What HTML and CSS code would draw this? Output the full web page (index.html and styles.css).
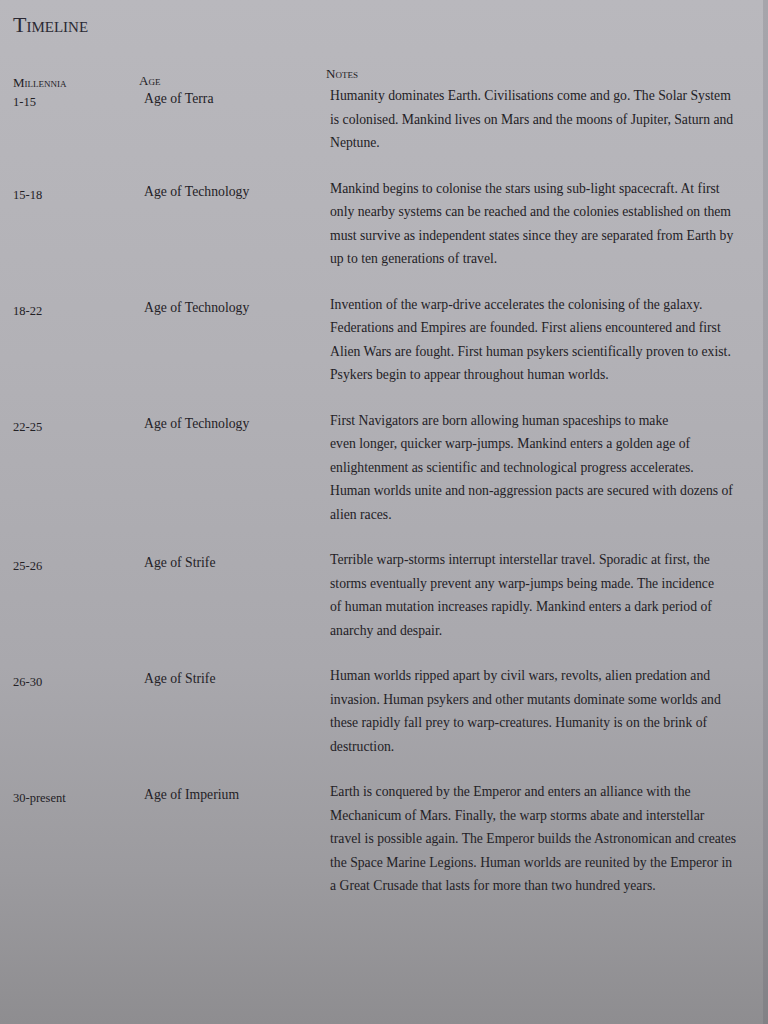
FILE: index.html
```html
<!DOCTYPE html>
<html lang="en">
<head>
<meta charset="utf-8">
<title>Timeline</title>
<link rel="stylesheet" href="styles.css">
</head>
<body>
<main class="page">
  <h1 class="title">Timeline</h1>
  <div class="timeline">
    <div class="row head">
      <span class="mil">Millennia</span>
      <span class="age">Age</span>
      <span class="notes">Notes</span>
    </div>
    <div class="row">
      <span class="mil">1-15</span>
      <span class="age">Age of Terra</span>
      <p class="notes">Humanity dominates Earth. Civilisations come and go. The Solar System<br>is colonised. Mankind lives on Mars and the moons of Jupiter, Saturn and<br>Neptune.</p>
    </div>
    <div class="row">
      <span class="mil">15-18</span>
      <span class="age">Age of Technology</span>
      <p class="notes">Mankind begins to colonise the stars using sub-light spacecraft. At first<br>only nearby systems can be reached and the colonies established on them<br>must survive as independent states since they are separated from Earth by<br>up to ten generations of travel.</p>
    </div>
    <div class="row">
      <span class="mil">18-22</span>
      <span class="age">Age of Technology</span>
      <p class="notes">Invention of the warp-drive accelerates the colonising of the galaxy.<br>Federations and Empires are founded. First aliens encountered and first<br>Alien Wars are fought. First human psykers scientifically proven to exist.<br>Psykers begin to appear throughout human worlds.</p>
    </div>
    <div class="row">
      <span class="mil">22-25</span>
      <span class="age">Age of Technology</span>
      <p class="notes">First Navigators are born allowing human spaceships to make<br>even longer, quicker warp-jumps. Mankind enters a golden age of<br>enlightenment as scientific and technological progress accelerates.<br>Human worlds unite and non-aggression pacts are secured with dozens of<br>alien races.</p>
    </div>
    <div class="row">
      <span class="mil">25-26</span>
      <span class="age">Age of Strife</span>
      <p class="notes">Terrible warp-storms interrupt interstellar travel. Sporadic at first, the<br>storms eventually prevent any warp-jumps being made. The incidence<br>of human mutation increases rapidly. Mankind enters a dark period of<br>anarchy and despair.</p>
    </div>
    <div class="row">
      <span class="mil">26-30</span>
      <span class="age">Age of Strife</span>
      <p class="notes">Human worlds ripped apart by civil wars, revolts, alien predation and<br>invasion. Human psykers and other mutants dominate some worlds and<br>these rapidly fall prey to warp-creatures. Humanity is on the brink of<br>destruction.</p>
    </div>
    <div class="row">
      <span class="mil">30-present</span>
      <span class="age">Age of Imperium</span>
      <p class="notes">Earth is conquered by the Emperor and enters an alliance with the<br>Mechanicum of Mars. Finally, the warp storms abate and interstellar<br>travel is possible again. The Emperor builds the Astronomican and creates<br>the Space Marine Legions. Human worlds are reunited by the Emperor in<br>a Great Crusade that lasts for more than two hundred years.</p>
    </div>
  </div>
</main>
</body>
</html>
```

FILE: styles.css
```css
html, body {
  margin: 0;
  padding: 0;
}

body {
  width: 768px;
  min-height: 1024px;
  background: linear-gradient(180deg, #b9b8bd 0%, #b2b1b6 35%, #a9a8ad 65%, #9c9b9f 85%, #8e8d90 100%);
  font-family: "Liberation Serif", "Times New Roman", serif;
  color: #232126;
}

.page {
  box-sizing: border-box;
  min-height: 1024px;
  padding: 11px 0 0 13px;
  border-right: 5px solid rgba(70, 68, 78, 0.16);
}

.title {
  margin: 0;
  font-size: 22px;
  line-height: 28px;
  font-weight: normal;
  font-variant: small-caps;
  color: #2b2933;
}

.timeline {
  display: flex;
  flex-direction: column;
  gap: 22px;
  margin-top: 25px;
}

.row {
  display: grid;
  grid-template-columns: 131px 186px 1fr;
  align-items: start;
  font-size: 13.7px;
  line-height: 23.5px;
}

.row .mil {
  padding-top: 7px;
  font-size: 12.5px;
}

.row .age {
  padding-top: 3px;
}

.notes {
  margin: 0;
  white-space: nowrap;
}

.head {
  font-variant: small-caps;
  font-size: 13px;
  line-height: 20px;
  margin-bottom: -22px;
}

.head .mil {
  padding-top: 9px;
  margin-bottom: -9px;
  font-size: 13px;
}

.head .age {
  padding-top: 7px;
  margin-bottom: -7px;
  margin-left: -5px;
}

.head .notes {
  margin-left: -4px;
}
```
